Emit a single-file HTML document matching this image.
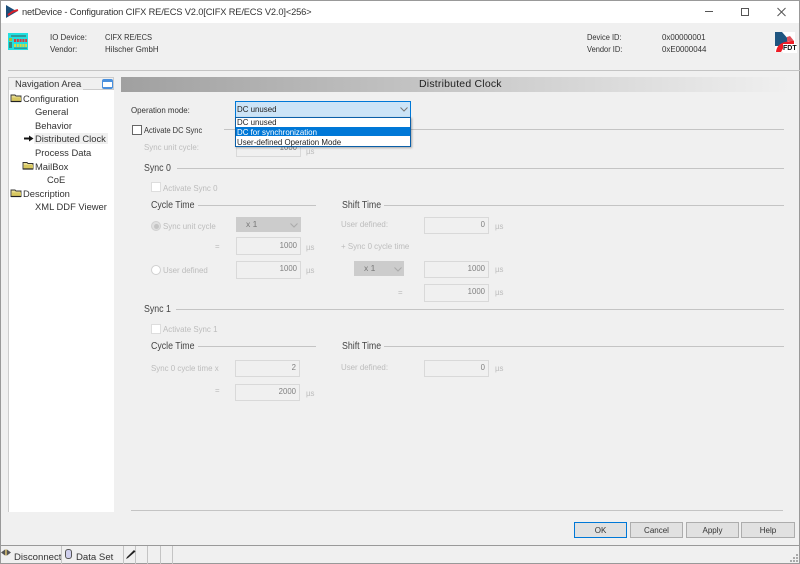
<!DOCTYPE html>
<html><head><meta charset="utf-8"><style>
html,body{margin:0;padding:0}
body{width:800px;height:564px;background:#f0f0f0;position:relative;overflow:hidden;font-family:"Liberation Sans",sans-serif;color:#222}
div,span{position:absolute;white-space:nowrap;box-sizing:border-box}
.t{font-size:8.5px;line-height:12px;height:12px;color:#333;transform:scaleX(.93);transform-origin:0 0}
.x{transform:scaleX(.88)}
.n{font-size:9.4px;line-height:14px;height:14px;color:#333}
.h{font-size:10px;line-height:14px;height:14px;color:#444;transform:scaleX(.88);transform-origin:0 0}
.d{font-size:8.5px;line-height:12px;height:12px;color:#bcbcbc;transform:scaleX(.93);transform-origin:0 0}
.l{height:1px;background:#c4c4c4}
.i{background:#f0f0f0;border:1px solid #d9d9d9;font-size:7.8px;text-align:right;padding-right:3px;line-height:13px;color:#808080;height:18px}
.c{background:#cccccc;height:15px;font-size:8.5px;color:#777;line-height:15px;padding-left:10px}
.cb{width:10px;height:10px;background:#fff;border:1px solid #ddd}
.r{width:10px;height:10px;border-radius:50%;background:#fff;border:1px solid #d0d0d0}
.b{height:16px;top:522px;width:53px;background:#e1e1e1;border:1px solid #adadad;font-size:8px;text-align:center;line-height:15px;color:#333}
</style></head><body>
<div style="left:0;top:0;width:800px;height:23px;background:#fff"></div>
<div style="left:0;top:0;width:800px;height:1px;background:#999"></div>
<div style="left:0;top:0;width:1px;height:564px;background:#999"></div>
<div style="left:799px;top:0;width:1px;height:564px;background:#999"></div>
<svg style="position:absolute;left:6px;top:5px" width="13" height="13" viewBox="0 0 13 13"><path d="M0 0L11 6.500L0 13Z" fill="#1c4f7a"/><path d="M2 10L7 6.500L12 5" stroke="#d8202a" stroke-width="2" fill="none"/></svg>
<div style="left:22px;top:5px;font-size:9.3px;line-height:14px;color:#333;letter-spacing:-.15px">netDevice - Configuration CIFX RE/ECS V2.0[CIFX RE/ECS V2.0]&lt;256&gt;</div>
<svg style="position:absolute;left:700px;top:5px" width="90" height="14" fill="none" stroke="#555"><path d="M5 6.500H13"/><rect x="41.500" y="3.500" width="7" height="7"/><path d="M77.500 3L85.500 11M85.500 3L77.500 11"/></svg>

<svg style="position:absolute;left:8px;top:33px" width="20" height="17"><rect width="20" height="17" fill="#21e0e0"/><rect x="3" y="2" width="15" height="2" fill="#2f9a9a"/><path d="M6 7.500H19" stroke="#d83a40" stroke-width="3" stroke-dasharray="2 .8"/><path d="M6 12.500H19" stroke="#d8d840" stroke-width="3" stroke-dasharray="2 .8"/><rect x="1" y="5" width="3" height="3" fill="#a0c030"/><rect x="1" y="9" width="3" height="6" fill="#3a8a80"/><rect x="6" y="14.500" width="13" height="1.500" fill="#2f9a9a"/></svg>
<div class="t" style="left:50px;top:31px">IO Device:</div>
<div class="t x" style="left:105px;top:31px">CIFX RE/ECS</div>
<div class="t" style="left:50px;top:43px">Vendor:</div>
<div class="t" style="left:105px;top:43px">Hilscher GmbH</div>
<div class="t x" style="left:587px;top:31px">Device ID:</div>
<div class="t" style="left:662px;top:31px">0x00000001</div>
<div class="t x" style="left:587px;top:43px">Vendor ID:</div>
<div class="t" style="left:662px;top:43px">0xE0000044</div>
<svg style="position:absolute;left:775px;top:32px" width="20" height="20"><rect width="20" height="20" fill="#fff"/><path d="M0 0H7L14 8L7 14H0Z" fill="#1f5580"/><path d="M1 20C2 12 8 9 19 9V13H10L6 20Z" fill="#ee1c25"/><path d="M12 5L15 4L19 9H12Z" fill="#e0505a"/></svg>
<div style="left:783px;top:44px;font-size:7px;font-weight:bold;line-height:9px;color:#111;background:#fff">FDT</div>
<div class="l" style="left:8px;top:70px;width:792px"></div>

<div style="left:8px;top:77px;width:106px;height:435px;background:#fff"></div>
<div style="left:8px;top:77px;width:106px;height:13px;background:#f0f0f0;border:1px solid #ccc;border-bottom:0"></div>
<div style="left:83px;top:89px;width:31px;height:1px;background:#ccc"></div>
<div style="left:8px;top:77px;width:1px;height:435px;background:#ccc"></div>
<div class="n" style="left:15px;top:77px">Navigation Area</div>
<div style="left:102px;top:79px;width:11px;height:10px;background:#4a90dd;border-radius:2px"></div>
<div style="left:103px;top:82px;width:9px;height:5px;background:#fff"></div>
<div style="left:34px;top:133px;width:74px;height:11px;background:#f0f0f0"></div>
<svg style="position:absolute;left:0;top:90px" width="50" height="110"><defs><g id="f"><path d="M0 1.500H4L5 2.500H10V8H0Z" fill="#e8dc90" stroke="#333" stroke-width=".9"/><path d="M1 4H10V7.500H1Z" fill="#d8c860"/><path d="M0 8H10" stroke="#222" stroke-width="1.200"/></g></defs><use href="#f" x="11" y="3.500"/><use href="#f" x="23" y="71"/><use href="#f" x="11" y="98.500"/><path d="M24 47.500H29V45.500L33.500 48.500L29 51.500V49.500H24Z" fill="#111"/></svg>
<div class="n" style="left:23px;top:92px">Configuration</div>
<div class="n" style="left:35px;top:105px">General</div>
<div class="n" style="left:35px;top:119px">Behavior</div>
<div class="n" style="left:35px;top:132px">Distributed Clock</div>
<div class="n" style="left:35px;top:146px">Process Data</div>
<div class="n" style="left:35px;top:160px">MailBox</div>
<div class="n" style="left:47px;top:173px">CoE</div>
<div class="n" style="left:23px;top:187px">Description</div>
<div class="n" style="left:35px;top:200px">XML DDF Viewer</div>

<div style="left:121px;top:77px;width:670px;height:15px;background:linear-gradient(90deg,#a0a0a0,#f0f0f0)"></div>
<div style="left:419px;top:77px;font-size:10.500px;line-height:15px;color:#222;letter-spacing:.2px">Distributed Clock</div>

<div class="t" style="left:131px;top:104px">Operation mode:</div>
<div style="left:132px;top:125px;width:10px;height:10px;background:#fff;border:1px solid #666"></div>
<div class="t x" style="left:144px;top:124px">Activate DC Sync</div>
<div class="l" style="left:224px;top:129px;width:560px"></div>
<div class="d" style="left:144px;top:141px">Sync unit cycle:</div>
<div class="i" style="left:236px;top:139px;width:65px;padding-top:1px">1000</div>
<div class="d" style="left:306px;top:145px">µs</div>

<div style="left:235px;top:101px;width:176px;height:17px;background:#cce4f7;border:1px solid #0078d7"></div>
<div class="t" style="left:237px;top:103px;color:#222">DC unused</div>
<svg style="position:absolute;left:400px;top:107px" width="8" height="5" fill="none" stroke="#777"><path d="M.5 .5L4 4L7.500 .5"/></svg>
<div style="left:235px;top:117px;width:176px;height:30px;background:#fff;border:1px solid #0a5fa8;box-shadow:1px 1px 2px rgba(0,0,0,.3)"></div>
<div style="left:236px;top:127px;width:174px;height:9px;background:#0078d7"></div>
<div class="t" style="left:237px;top:116px;color:#222">DC unused</div>
<div class="t" style="left:237px;top:126px;color:#fff">DC for synchronization</div>
<div class="t" style="left:237px;top:136px;color:#222">User-defined Operation Mode</div>

<div class="h" style="left:144px;top:162px">Sync 0</div>
<div class="l" style="left:177px;top:168px;width:607px"></div>
<div class="cb" style="left:151px;top:182px"></div>
<div class="d" style="left:163px;top:182px">Activate Sync 0</div>

<div class="h" style="left:151px;top:199px">Cycle Time</div>
<div class="l" style="left:198px;top:205px;width:118px"></div>
<div class="h" style="left:342px;top:199px">Shift Time</div>
<div class="l" style="left:384px;top:205px;width:400px"></div>

<div class="r" style="left:151px;top:221px;background:#e0e0e0"></div>
<div style="left:153.500px;top:223.500px;width:5px;height:5px;border-radius:50%;background:#c4c4c4"></div>
<div class="d" style="left:163px;top:220px">Sync unit cycle</div>
<div class="c" style="left:236px;top:217px;width:65px">x 1</div>
<svg style="position:absolute;left:290px;top:223px" width="8" height="5" fill="none" stroke="#aaa"><path d="M.5 .5L4 4L7.500 .5"/></svg>
<div class="d" style="left:215px;top:240px">=</div>
<div class="i" style="left:236px;top:237px;width:65px;padding-top:1px">1000</div>
<div class="d" style="left:306px;top:241px">µs</div>
<div class="r" style="left:151px;top:265px"></div>
<div class="d" style="left:163px;top:264px">User defined</div>
<div class="i" style="left:236px;top:261px;width:65px;padding-top:0">1000</div>
<div class="d" style="left:306px;top:264px">µs</div>

<div class="d" style="left:341px;top:218px">User defined:</div>
<div class="i" style="left:424px;top:217px;width:65px;height:17px;padding-top:0">0</div>
<div class="d" style="left:495px;top:220px">µs</div>
<div class="d" style="left:341px;top:240px">+ Sync 0 cycle time</div>
<div class="c" style="left:354px;top:261px;width:50px">x 1</div>
<svg style="position:absolute;left:394px;top:267px" width="8" height="5" fill="none" stroke="#aaa"><path d="M.5 .5L4 4L7.500 .5"/></svg>
<div class="i" style="left:424px;top:261px;width:65px;height:17px;padding-top:0">1000</div>
<div class="d" style="left:495px;top:263px">µs</div>
<div class="d" style="left:398px;top:286px">=</div>
<div class="i" style="left:424px;top:284px;width:65px;padding-top:0">1000</div>
<div class="d" style="left:495px;top:286px">µs</div>

<div class="h" style="left:144px;top:303px">Sync 1</div>
<div class="l" style="left:176px;top:309px;width:608px"></div>
<div class="cb" style="left:151px;top:324px"></div>
<div class="d" style="left:163px;top:323px">Activate Sync 1</div>
<div class="h" style="left:151px;top:340px">Cycle Time</div>
<div class="l" style="left:198px;top:346px;width:118px"></div>
<div class="h" style="left:342px;top:340px">Shift Time</div>
<div class="l" style="left:384px;top:346px;width:400px"></div>
<div class="d" style="left:151px;top:362px">Sync 0 cycle time&nbsp;x</div>
<div class="i" style="left:235px;top:360px;width:65px;height:17px;padding-top:0">2</div>
<div class="d" style="left:341px;top:361px">User defined:</div>
<div class="i" style="left:424px;top:360px;width:65px;height:17px;padding-top:0">0</div>
<div class="d" style="left:495px;top:362px">µs</div>
<div class="d" style="left:215px;top:384px">=</div>
<div class="i" style="left:235px;top:384px;width:65px;height:17px;padding-top:0">2000</div>
<div class="d" style="left:306px;top:387px">µs</div>

<div class="l" style="left:131px;top:510px;width:652px"></div>
<div class="b" style="left:574px;border:1.500px solid #0078d7">OK</div>
<div class="b" style="left:630px">Cancel</div>
<div class="b" style="left:686px">Apply</div>
<div class="b" style="left:741px;width:54px">Help</div>

<div style="left:0;top:545px;width:800px;height:1px;background:#999"></div>
<div style="left:0;top:563px;width:800px;height:1px;background:#999"></div>
<div class="l" style="left:61px;top:546px;width:1px;height:18px"></div>
<div class="l" style="left:123px;top:546px;width:1px;height:18px"></div>
<div class="l" style="left:135px;top:546px;width:1px;height:18px"></div>
<div class="l" style="left:147px;top:546px;width:1px;height:18px"></div>
<div class="l" style="left:160px;top:546px;width:1px;height:18px"></div>
<div class="l" style="left:172px;top:546px;width:1px;height:18px"></div>
<svg style="position:absolute;left:1px;top:549px" width="11" height="8"><path d="M0 3.500L4 .5V6.500Z M10 3.500L6 .5V6.500Z" fill="#555"/><rect x="4.300" y=".5" width="1.500" height="6" fill="#a89040"/></svg>
<div style="left:14px;top:551px;width:47px;overflow:hidden;font-size:9.6px;line-height:13px;color:#333">Disconnected</div>
<div style="left:65px;top:549px;width:7px;height:10px;background:#d0d0ee;border:1px solid #555;border-radius:3px"></div>
<div style="left:76px;top:551px;font-size:9.6px;line-height:13px;color:#333">Data Set</div>
<svg style="position:absolute;left:125px;top:549px" width="11" height="11"><path d="M1 10L2 8L9 1L10.500 2.500L3 9Z" fill="#222"/></svg>
<svg style="position:absolute;left:790px;top:554px" width="9" height="9" fill="#aaa"><rect x="6" y="0" width="2" height="2"/><rect x="3" y="3" width="2" height="2"/><rect x="6" y="3" width="2" height="2"/><rect x="0" y="6" width="2" height="2"/><rect x="3" y="6" width="2" height="2"/><rect x="6" y="6" width="2" height="2"/></svg>
</body></html>
